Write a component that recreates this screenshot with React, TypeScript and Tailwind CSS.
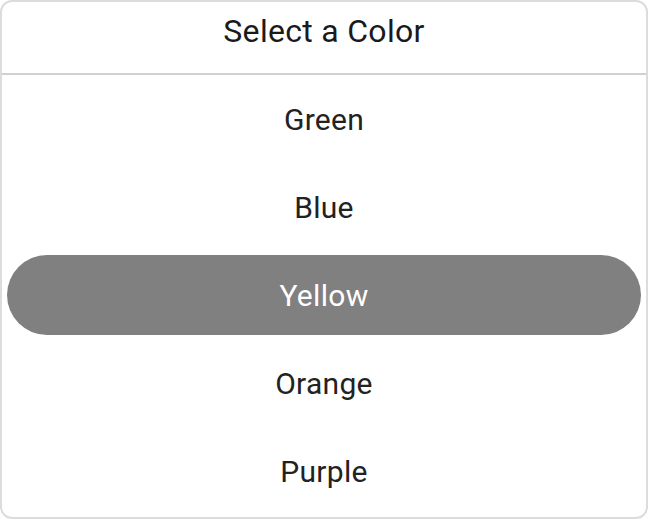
import React from "react";

const items = ["Green", "Blue", "Yellow", "Orange", "Purple"];

export default function App() {
  return (
    <div className="w-[648px] h-[520px] bg-white" style={{ fontFamily: "Roboto, 'Liberation Sans', sans-serif" }}>
      <div className="w-[648px] h-[519px] border-2 border-[#dcdcdc] rounded-[12px] flex flex-col overflow-hidden">
        <div className="h-[71px] flex items-center justify-center text-[32px] tracking-[0.3px] text-[#1a1a1a] pb-[14px]">
          Select a Color
        </div>
        <div className="h-[2px] bg-[#d0d0d0]" />
        <div className="flex flex-col">
          {items.map((c) => (
            <div key={c} className="h-[88px] px-[5px] py-[4px]">
              <div
                className={
                  c === "Yellow"
                    ? "h-full rounded-full bg-[#808080] text-white flex items-center justify-center text-[30px] tracking-[0.3px]"
                    : "h-full flex items-center justify-center text-[30px] tracking-[0.3px] text-[#222222]"
                }
              >
                {c}
              </div>
            </div>
          ))}
        </div>
      </div>
    </div>
  );
}
